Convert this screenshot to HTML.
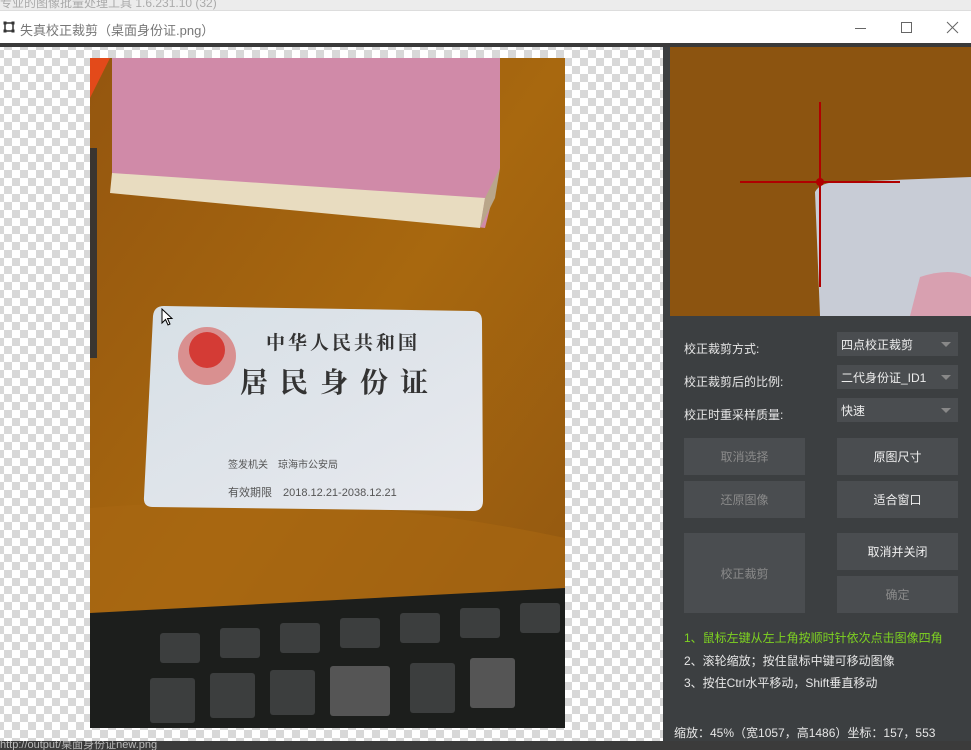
<!DOCTYPE html>
<html><head><meta charset="utf-8">
<style>
*{margin:0;padding:0;box-sizing:border-box}
body{width:971px;height:750px;overflow:hidden;background:#3a3a3a;font-family:"Liberation Sans","Noto Sans CJK SC",sans-serif;position:relative}
.top{position:absolute;left:0;top:0;width:971px;height:10px;background:#ececec;overflow:hidden}
.top span{position:absolute;left:0;top:-6px;font-size:12px;color:#aaa}
.title{position:absolute;left:0;top:10px;width:971px;height:33px;background:#fff;border-top:1px solid #ddd}
.title .t{position:absolute;left:20px;top:9px;font-size:13px;color:#777}
.sep{position:absolute;left:0;top:43px;width:971px;height:4px;background:#3a3a3a}
.canvas{position:absolute;left:0;top:47px;width:663px;height:694px;
background-color:#fff;background-image:linear-gradient(45deg,#d8d8d8 25%,transparent 25%,transparent 75%,#d8d8d8 75%),linear-gradient(45deg,#d8d8d8 25%,transparent 25%,transparent 75%,#d8d8d8 75%);background-size:16px 16px;background-position:4px 3px,12px 11px}
.panel{position:absolute;left:663px;top:47px;width:308px;height:694px;background:#3c3f41}
.lbl{position:absolute;left:21px;font-size:12px;color:#e6e6e6}
.dd{position:absolute;left:174px;width:121px;height:24px;background:#4a4d50;color:#eee;font-size:12px;padding:4px 4px}
.dd:after{content:"";position:absolute;right:7px;top:10px;border-left:5px solid transparent;border-right:5px solid transparent;border-top:5px solid #888}
.btn{position:absolute;width:121px;background:#4a4d50;font-size:12px;display:flex;align-items:center;justify-content:center}
.dis{color:#8a8a8a}.en{color:#f0f0f0}
.tip{position:absolute;left:21px;font-size:12px;color:#e6e6e6}
.bot{position:absolute;left:0;top:741px;width:971px;height:9px;background:#3b3b3b;overflow:hidden}
.bot span{position:absolute;left:0;top:-5px;font-size:11px;color:#bbb}
</style></head><body>
<div class="top"><span>专业的图像批量处理工具 1.6.231.10 (32)</span></div>
<div class="title">
<svg style="position:absolute;left:3px;top:10px" width="12" height="12"><rect x="2" y="2" width="8" height="8" fill="none" stroke="#333" stroke-width="1.5"/><rect x="0.5" y="0.5" width="3" height="3" fill="#333"/><rect x="8.5" y="0.5" width="3" height="3" fill="#333"/><rect x="0.5" y="8.5" width="3" height="3" fill="#333"/><rect x="8.5" y="8.5" width="3" height="3" fill="#333"/></svg>
<div class="t">失真校正裁剪（桌面身份证.png）</div>
<svg style="position:absolute;left:855px;top:10px" width="110" height="16"><line x1="0" y1="7.5" x2="11" y2="7.5" stroke="#666"/><rect x="46.5" y="1.5" width="10" height="10" fill="none" stroke="#666"/><path d="M92 1 L103 12 M103 1 L92 12" stroke="#666"/></svg>
</div>
<div class="sep"></div>
<div class="canvas">
<svg style="position:absolute;left:90px;top:11px" width="475" height="670" viewBox="0 0 475 670">
<defs>
<linearGradient id="wood" x1="0" y1="0" x2="1" y2="1"><stop offset="0" stop-color="#94560f"/><stop offset="0.5" stop-color="#a8680f"/><stop offset="1" stop-color="#8f5510"/></linearGradient>
<linearGradient id="card" x1="0" y1="0" x2="1" y2="1"><stop offset="0" stop-color="#d7e0e6"/><stop offset="0.5" stop-color="#dfe4ea"/><stop offset="1" stop-color="#e8eaef"/></linearGradient>
</defs>
<rect width="475" height="670" fill="url(#wood)"/>
<path d="M0 0 L20 0 L0 40Z" fill="#e34a1a"/>
<path d="M0 90 L7 90 L7 300 L0 300Z" fill="#3a3530"/>
<path d="M22 0 L410 0 L410 110 L395 170 L22 120Z" fill="#d08aa8"/>
<path d="M22 115 L395 140 L390 170 L20 135Z" fill="#e8dcc0"/>
<path d="M395 140 L410 110 L405 140 L390 170Z" fill="#b9a68a"/>
<path d="M0 450 Q240 430 475 480 L475 540 L0 555Z" fill="#a86812" opacity="0.6"/>
<path d="M0 555 L475 530 L475 670 L0 670Z" fill="#1c1e1c"/>
<g fill="#3c3e3e"><rect x="70" y="575" width="40" height="30" rx="3"/><rect x="130" y="570" width="40" height="30" rx="3"/><rect x="190" y="565" width="40" height="30" rx="3"/><rect x="250" y="560" width="40" height="30" rx="3"/><rect x="310" y="555" width="40" height="30" rx="3"/><rect x="370" y="550" width="40" height="30" rx="3"/><rect x="430" y="545" width="40" height="30" rx="3"/>
<rect x="60" y="620" width="45" height="45" rx="3"/><rect x="120" y="615" width="45" height="45" rx="3"/><rect x="180" y="612" width="45" height="45" rx="3"/><rect x="240" y="608" width="60" height="50" rx="3" fill="#555"/><rect x="320" y="605" width="45" height="50" rx="3"/><rect x="380" y="600" width="45" height="50" rx="3" fill="#555"/></g>
<path d="M63 258 Q64 248 74 248 L382 253 Q392 253 392 263 L393 443 Q393 453 383 453 L63 449 Q53 449 54 439Z" fill="url(#card)"/>
<circle cx="117" cy="298" r="29" fill="#d99090"/><circle cx="117" cy="292" r="18" fill="#d43b35"/>
<text x="176" y="291" font-size="19" font-family="Noto Serif CJK SC,serif" font-weight="bold" fill="#333" letter-spacing="3">中华人民共和国</text>
<text x="150" y="334" font-size="28" font-family="Noto Serif CJK SC,serif" font-weight="bold" fill="#333" letter-spacing="12">居民身份证</text>
<text x="138" y="410" font-size="10" fill="#555">签发机关　琼海市公安局</text>
<text x="138" y="438" font-size="11" fill="#555">有效期限　2018.12.21-2038.12.21</text>
</svg>
<svg style="position:absolute;left:161px;top:261px" width="14" height="20"><path d="M1 1 L1 15 L4.5 11.5 L7 17 L9 16 L6.5 10.5 L11 10.5Z" fill="#fff" stroke="#000"/></svg>
</div>
<div class="panel">
<svg style="position:absolute;left:7px;top:0" width="301" height="269">
<rect width="301" height="269" fill="#8c5410"/>
<path d="M145 145 Q150 135 170 135 L301 130 L301 269 L150 269Z" fill="#c8ccd6"/>
<path d="M250 230 Q280 220 301 230 L301 269 L240 269Z" fill="#d8a0b0"/>
<line x1="150" y1="55" x2="150" y2="240" stroke="#b00000" stroke-width="2"/>
<line x1="70" y1="135" x2="230" y2="135" stroke="#b00000" stroke-width="2"/>
<circle cx="150" cy="135" r="4" fill="#b00000"/>
</svg>
<div class="lbl" style="top:293px">校正裁剪方式:</div>
<div class="lbl" style="top:326px">校正裁剪后的比例:</div>
<div class="lbl" style="top:359px">校正时重采样质量:</div>
<div class="dd" style="top:285px">四点校正裁剪</div>
<div class="dd" style="top:318px">二代身份证_ID1</div>
<div class="dd" style="top:351px">快速</div>
<div class="btn dis" style="left:21px;top:391px;height:37px">取消选择</div>
<div class="btn en" style="left:174px;top:391px;height:37px">原图尺寸</div>
<div class="btn dis" style="left:21px;top:434px;height:37px">还原图像</div>
<div class="btn en" style="left:174px;top:434px;height:37px">适合窗口</div>
<div class="btn dis" style="left:21px;top:486px;height:80px">校正裁剪</div>
<div class="btn en" style="left:174px;top:486px;height:37px">取消并关闭</div>
<div class="btn dis" style="left:174px;top:529px;height:37px">确定</div>
<div class="tip" style="top:582px;color:#7ed321">1、鼠标左键从左上角按顺时针依次点击图像四角</div>
<div class="tip" style="top:605px">2、滚轮缩放；按住鼠标中键可移动图像</div>
<div class="tip" style="top:627px">3、按住Ctrl水平移动，Shift垂直移动</div>
<div class="tip" style="top:677px;left:11px">缩放：45%（宽1057，高1486）坐标：157，553</div>
</div>
<div class="bot"><span>http://output/桌面身份证new.png</span></div>
</body></html>
